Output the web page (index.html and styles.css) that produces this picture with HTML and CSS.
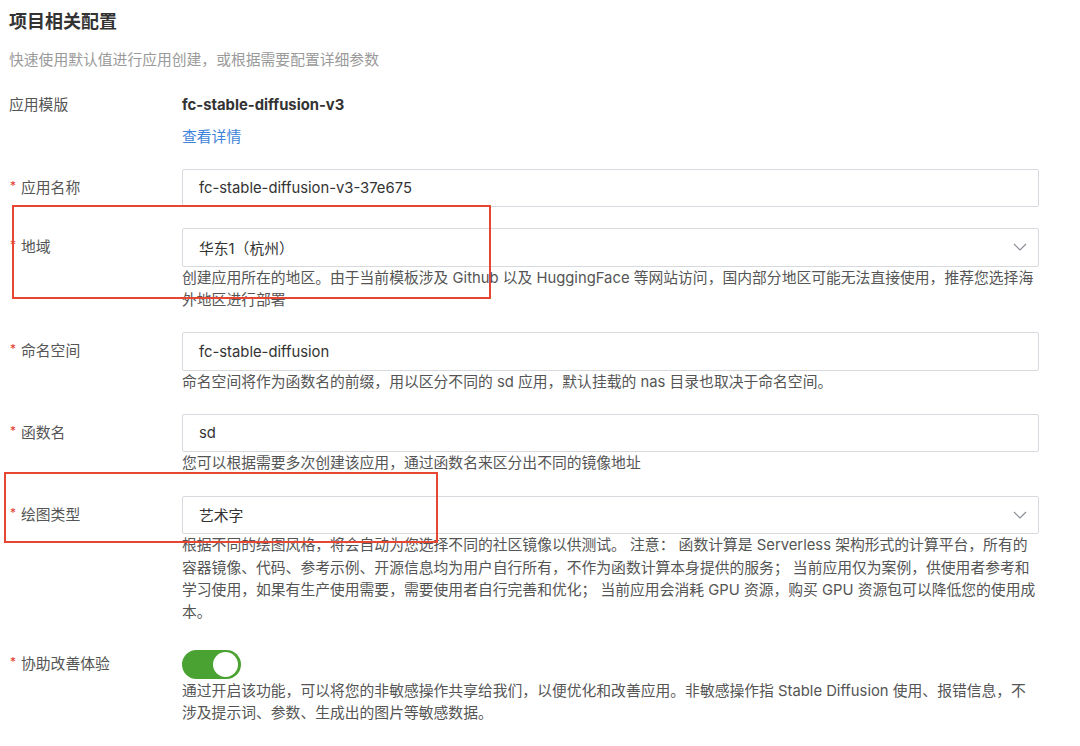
FILE: index.html
```html
<!DOCTYPE html>
<html lang="zh-CN">
<head>
<meta charset="utf-8">
<title>项目相关配置</title>
<link rel="stylesheet" href="styles.css">
</head>
<body>
<div class="page">
  <h2 class="title">项目相关配置</h2>
  <p class="subtitle">快速使用默认值进行应用创建，或根据需要配置详细参数</p>

  <div class="form">
    <div class="row row-static">
      <div class="label plain">应用模版</div>
      <div class="control">
        <div class="static-value">fc-stable-diffusion-v3</div>
        <a class="link">查看详情</a>
      </div>
    </div>

    <div class="row">
      <div class="label"><span class="star">*</span>应用名称</div>
      <div class="control">
        <div class="input">fc-stable-diffusion-v3-37e675</div>
      </div>
    </div>

    <div class="row">
      <div class="label"><span class="star">*</span>地域</div>
      <div class="control">
        <div class="input select">
          <span>华东1（杭州）</span>
          <svg class="chev" width="14" height="8" viewBox="0 0 14 8"><path d="M1 1 L7 7 L13 1" fill="none" stroke="#8a8f97" stroke-width="1.2"/></svg>
        </div>
        <div class="help">创建应用所在的地区。由于当前模板涉及 Github 以及 HuggingFace 等网站访问，国内部分地区可能无法直接使用，推荐您选择海<br>外地区进行部署</div>
      </div>
    </div>

    <div class="row">
      <div class="label"><span class="star">*</span>命名空间</div>
      <div class="control">
        <div class="input">fc-stable-diffusion</div>
        <div class="help">命名空间将作为函数名的前缀，用以区分不同的 sd 应用，默认挂载的 nas 目录也取决于命名空间。</div>
      </div>
    </div>

    <div class="row">
      <div class="label"><span class="star">*</span>函数名</div>
      <div class="control">
        <div class="input">sd</div>
        <div class="help">您可以根据需要多次创建该应用，通过函数名来区分出不同的镜像地址</div>
      </div>
    </div>

    <div class="row">
      <div class="label"><span class="star">*</span>绘图类型</div>
      <div class="control">
        <div class="input select">
          <span>艺术字</span>
          <svg class="chev" width="14" height="8" viewBox="0 0 14 8"><path d="M1 1 L7 7 L13 1" fill="none" stroke="#8a8f97" stroke-width="1.2"/></svg>
        </div>
        <div class="help">根据不同的绘图风格，将会自动为您选择不同的社区镜像以供测试。 注意： 函数计算是 Serverless 架构形式的计算平台，所有的<br>容器镜像、代码、参考示例、开源信息均为用户自行所有，不作为函数计算本身提供的服务； 当前应用仅为案例，供使用者参考和<br>学习使用，如果有生产使用需要，需要使用者自行完善和优化； 当前应用会消耗 GPU 资源，购买 GPU 资源包可以降低您的使用成<br>本。</div>
      </div>
    </div>

    <div class="row">
      <div class="label"><span class="star">*</span>协助改善体验</div>
      <div class="control">
        <div class="switch-wrap"><div class="switch on"><span class="knob"></span></div></div>
        <div class="help">通过开启该功能，可以将您的非敏感操作共享给我们，以便优化和改善应用。非敏感操作指 Stable Diffusion 使用、报错信息，不<br>涉及提示词、参数、生成出的图片等敏感数据。</div>
      </div>
    </div>
  </div>

  <div class="annot annot-region"></div>
  <div class="annot annot-type"></div>
</div>
</body>
</html>
```

FILE: styles.css
```css
* { box-sizing: border-box; }

html, body {
  margin: 0;
  padding: 0;
  background: #fff;
}

body {
  font-family: "Inter", "Noto Sans CJK SC", sans-serif;
  color: #333;
}

.page {
  position: relative;
  width: 1080px;
  height: 746px;
  padding: 10px 0 0 9px;
  overflow: hidden;
}

.title {
  margin: 0;
  font-size: 18px;
  line-height: 24px;
  font-weight: 700;
  color: #333;
}

.subtitle {
  margin: 15px 0 0;
  font-size: 14.8px;
  line-height: 22px;
  color: #9a9a9a;
}

.form {
  margin-top: 23px;
}

.row {
  display: grid;
  grid-template-columns: 173px 857px;
  margin-bottom: 21px;
}

.label {
  font-size: 14.8px;
  line-height: 38.3px;
  color: #555;
  white-space: nowrap;
}

.label.plain {
  line-height: 22px;
}

.star {
  display: inline-block;
  width: 12px;
  padding-left: 1px;
  color: #e0392b;
  font-size: 12px;
  vertical-align: top;
  line-height: 34px;
}

.control {
  display: flex;
  flex-direction: column;
  align-items: flex-start;
}

.static-value {
  font-size: 14.8px;
  line-height: 22px;
  font-weight: 700;
  color: #333;
}

.link {
  margin-top: 10px;
  font-size: 14.8px;
  line-height: 22px;
  color: #3e83d9;
  cursor: pointer;
}

.input {
  width: 857px;
  height: 38.3px;
  border: 1px solid #d6d9de;
  border-radius: 2px;
  padding: 0 10px 0 16px;
  font-size: 14.8px;
  color: #333;
  display: flex;
  align-items: center;
  justify-content: space-between;
}

.chev {
  display: block;
  margin-right: 1px;
}

.help {
  width: 880px;
  font-size: 14.8px;
  line-height: 22.4px;
  color: #555;
}

.switch-wrap {
  height: 35px;
  padding-top: 5px;
}

.switch {
  width: 59px;
  height: 29px;
  border-radius: 15px;
  background: #4aa232;
  display: flex;
  align-items: center;
  justify-content: flex-end;
  padding-right: 3px;
}

.knob {
  width: 25px;
  height: 25px;
  border-radius: 50%;
  background: #fff;
}

.annot {
  position: absolute;
  border: 2px solid #e64632;
  pointer-events: none;
}

.annot-region {
  left: 12px;
  top: 205px;
  width: 479px;
  height: 94px;
}

.annot-type {
  left: 4px;
  top: 472px;
  width: 434px;
  height: 71px;
}
```
